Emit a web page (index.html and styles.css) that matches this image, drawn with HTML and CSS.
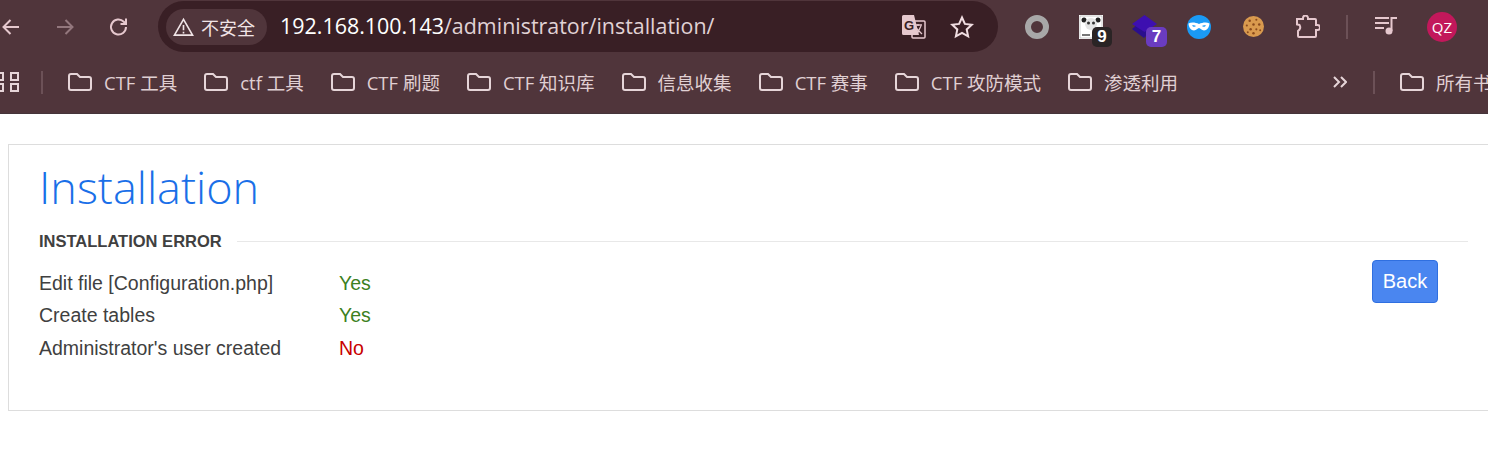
FILE: index.html
```html
<!DOCTYPE html>
<html>
<head>
    <title>Installation</title>
    <link rel="stylesheet" href="styles.css">
</head>
<body>
    <svg class="defs" width="0" height="0">
        <symbol id="folder" viewBox="0 0 24 18">
            <path d="M3 1h6l3 3h9a2 2 0 0 1 2 2v9a2 2 0 0 1-2 2H3a2 2 0 0 1-2-2V3a2 2 0 0 1 2-2z"/>
        </symbol>
    </svg>
    <header class="browser">
        <div class="toolbar">
            <div class="slot first">
                <svg class="ico" viewBox="0 0 20 20"><path d="M18 10H2M9.500 3 2.500 10l7 7"/></svg>
            </div>
            <div class="slot dim">
                <svg class="ico" viewBox="0 0 20 20"><path d="M2 10h16M10.500 3l7 7-7 7"/></svg>
            </div>
            <div class="slot">
                <svg class="ico" viewBox="0 0 20 20"><path d="M17 10a7.500 7.500 0 1 1-2.200-5.300L17 7M17 1.500V7h-5.500"/></svg>
            </div>
            <div class="omnibox">
                <div class="chip">
                    <svg class="warn" viewBox="0 0 22 20"><path d="M11 2 1.500 18.500h19zM11 8v5.500M11 15v1.800"/></svg>
                    <span>不安全</span>
                </div>
                <div class="url">192.168.100.143<span class="path">/administrator/installation/</span></div>
                <div class="omni-end">
                    <svg class="translate" viewBox="0 0 24 24">
                        <rect class="page-back" x="10" y="6" width="13" height="17" rx="1"/>
                        <path class="page-front" d="M1.500 0H12l5 20H1.500A1.500 1.500 0 0 1 0 18.500v-17A1.500 1.500 0 0 1 1.500 0z"/>
                        <text x="2" y="15" class="g">G</text>
                        <path class="page-x" d="M13 10h7M16 9v2M19 11l-4 8M14 13l6 6"/>
                    </svg>
                    <svg class="star" viewBox="0 0 24 24"><path d="m12 2.500 2.900 6.400 6.900.8-5.100 4.700 1.400 6.900-6.100-3.500-6.100 3.500 1.400-6.900-5.100-4.700 6.900-.8z"/></svg>
                </div>
            </div>
            <div class="extensions">
                <div class="slot"><div class="ring"></div></div>
                <div class="slot">
                    <svg class="panda" viewBox="0 0 24 24">
                        <rect width="24" height="24" fill="#fff"/>
                        <rect x="1" y="1" width="22" height="22" fill="none" stroke="#999" stroke-width=".5"/>
                        <circle cx="5" cy="5" r="2.500" fill="#222"/>
                        <circle cx="19" cy="5" r="2.500" fill="#222"/>
                        <circle cx="12" cy="9" r="6" fill="#e4e4e4"/>
                        <circle cx="9.500" cy="8" r="1.500" fill="#333"/>
                        <circle cx="14.500" cy="8" r="1.500" fill="#333"/>
                        <rect x="3" y="19" width="8" height="2" fill="#777"/>
                    </svg>
                    <span class="badge dark">9</span>
                </div>
                <div class="slot">
                    <svg class="stack" viewBox="0 0 25 24">
                        <path fill="#2a0f8e" d="M0 14 6 9l13 7-7 7z"/>
                        <path fill="#3d0fb0" d="M12.500 0 25 9l-12.500 8L0 9z"/>
                    </svg>
                    <span class="badge violet">7</span>
                </div>
                <div class="slot">
                    <svg class="mask" viewBox="0 0 24 24">
                        <circle cx="12" cy="12" r="12" fill="#1a9af5"/>
                        <path fill="#fff" d="M1.500 8.500c3-1.500 7-1 10.500.5 3.500-1.500 7.500-2 10.500-.5-.3 4-2.500 7-5.500 7-2.500 0-3.500-2.500-5-2.500s-2.500 2.500-5 2.500c-3 0-5.200-3-5.500-7z"/>
                        <path fill="#1a9af5" d="M5 10.500c1.500-.6 3-.4 4 .6-1 1-3 1-4-.6zM19 10.500c-1.500-.6-3-.4-4 .6 1 1 3 1 4-.6z"/>
                    </svg>
                </div>
                <div class="slot">
                    <svg class="cookie" viewBox="0 0 22 22">
                        <circle cx="11" cy="11" r="11" fill="#d99a4e"/>
                        <g fill="#8a4a1c">
                            <circle cx="7" cy="5" r="1.300"/><circle cx="14" cy="4" r="1.100"/>
                            <circle cx="11" cy="9" r="1.300"/><circle cx="4" cy="10" r="1.100"/>
                            <circle cx="17" cy="9" r="1.300"/><circle cx="8" cy="14" r="1.300"/>
                            <circle cx="14" cy="14" r="1.100"/><circle cx="11" cy="18" r="1.300"/>
                            <circle cx="18" cy="15" r="1"/><circle cx="5" cy="17" r="1"/>
                        </g>
                    </svg>
                </div>
                <div class="slot">
                    <svg class="puzzle" viewBox="0 0 25 24"><path d="M2 4h6V3a2.500 2.500 0 0 1 5 0v1h7a1 1 0 0 1 1 1v5h1.500a2.500 2.500 0 0 1 0 5H21v6a1 1 0 0 1-1 1H4a1 1 0 0 1-1-1v-5l1.500-1.500c1-1.500 1-3 0-4.500L2 9.500z"/></svg>
                </div>
                <div class="tool-sep"></div>
                <div class="slot">
                    <svg class="music" viewBox="0 0 24 20">
                        <path class="lines" d="M1 2h14M1 7h14M1 12h9"/>
                        <circle cx="15" cy="15" r="3.500" fill="#e6c8ce"/>
                        <path class="lines" d="M17.500 15V2H23"/>
                    </svg>
                </div>
                <div class="slot"><div class="avatar">QZ</div></div>
            </div>
        </div>
        <nav class="bookmarks">
            <svg class="apps" viewBox="0 0 19 20">
                <path d="M-4 1h7v7h-7zM11 1h7v7h-7zM-4 12h7v7h-7zM11 12h7v7h-7z"/>
            </svg>
            <div class="bm-sep"></div>
            <a class="bm"><svg class="folder"><use href="#folder"/></svg>CTF 工具</a>
            <a class="bm"><svg class="folder"><use href="#folder"/></svg>ctf 工具</a>
            <a class="bm"><svg class="folder"><use href="#folder"/></svg>CTF 刷题</a>
            <a class="bm"><svg class="folder"><use href="#folder"/></svg>CTF 知识库</a>
            <a class="bm"><svg class="folder"><use href="#folder"/></svg>信息收集</a>
            <a class="bm"><svg class="folder"><use href="#folder"/></svg>CTF 赛事</a>
            <a class="bm"><svg class="folder"><use href="#folder"/></svg>CTF 攻防模式</a>
            <a class="bm"><svg class="folder"><use href="#folder"/></svg>渗透利用</a>
            <svg class="more" viewBox="0 0 14 12"><path d="M1 1l5 5-5 5M8 1l5 5-5 5"/></svg>
            <div class="bm-sep end"></div>
            <a class="bm"><svg class="folder"><use href="#folder"/></svg>所有书签</a>
        </nav>
    </header>

    <main class="card">
        <h1>Installation</h1>
        <div class="section-title">
            <span>INSTALLATION ERROR</span>
            <div class="rule"></div>
        </div>
        <div class="content">
            <div class="checks">
                <div class="label">Edit file [Configuration.php]</div>
                <div class="yes">Yes</div>
                <div class="label">Create tables</div>
                <div class="yes">Yes</div>
                <div class="label">Administrator's user created</div>
                <div class="no">No</div>
            </div>
            <button class="back">Back</button>
        </div>
    </main>
</body>
</html>
```

FILE: styles.css
```css
* {
    box-sizing: border-box;
}
html, body {
    overflow: hidden;
}
body {
    margin: 0;
    height: 468px;
    background: #fff;
    font-family: "Liberation Sans", Arial, sans-serif;
    color: #404040;
}
.defs {
    position: absolute;
}

/* browser chrome */
.browser {
    background: #50353b;
    height: 114px;
    border-bottom: 1px solid #45343a;
}
.toolbar {
    display: flex;
    align-items: flex-start;
    height: 56px;
    padding-top: 1px;
}
.slot {
    position: relative;
    width: 54px;
    height: 51px;
    flex: none;
    display: flex;
    align-items: center;
    justify-content: center;
}
.slot.first {
    margin-left: -16px;
}
.slot.dim {
    opacity: 0.45;
}
.ico {
    width: 20px;
    height: 20px;
    fill: none;
    stroke: #e6c8ce;
    stroke-width: 2;
}
.omnibox {
    display: flex;
    align-items: center;
    width: 840px;
    height: 51px;
    margin-left: 12px;
    padding-left: 8px;
    background: #391f25;
    border-radius: 26px;
    flex: none;
}
.chip {
    display: flex;
    align-items: center;
    gap: 7px;
    width: 101px;
    height: 36px;
    padding-left: 7px;
    background: #50353b;
    border-radius: 18px;
    color: #f0e4e6;
    font-family: "Noto Sans CJK SC", sans-serif;
    font-size: 18px;
}
.warn {
    width: 21px;
    height: 20px;
    fill: none;
    stroke: #f0e4e6;
    stroke-width: 1.700;
}
.url {
    margin-top: -2px;
    margin-left: 13px;
    color: #fff;
    font-family: "Open Sans", sans-serif;
    font-size: 21.450px;
}
.path {
    color: #e0d2d5;
}
.omni-end {
    display: flex;
    align-items: center;
    gap: 24px;
    margin-left: auto;
    padding-right: 24px;
}
.translate {
    width: 24px;
    height: 24px;
}
.page-back {
    fill: #391f25;
    stroke: #e6c8ce;
    stroke-width: 1.500;
}
.page-front {
    fill: #e6c8ce;
}
.page-x {
    fill: none;
    stroke: #e6c8ce;
    stroke-width: 1.300;
}
.translate .g {
    fill: #391f25;
    font-size: 13px;
    font-weight: bold;
}
.star {
    width: 24px;
    height: 24px;
    fill: none;
    stroke: #f0dde1;
    stroke-width: 2;
}
.extensions {
    display: flex;
    align-items: center;
    margin-left: 12px;
}
.ring {
    width: 24px;
    height: 24px;
    border: 6px solid #a8a8a8;
    border-radius: 50%;
}
.panda {
    width: 24px;
    height: 24px;
}
.stack {
    width: 25px;
    height: 24px;
    margin-left: -2px;
}
.badge {
    position: absolute;
    left: 28px;
    top: 26px;
    width: 20px;
    height: 20px;
    border-radius: 5px;
    color: #fff;
    font-size: 17px;
    font-weight: bold;
    line-height: 20px;
    text-align: center;
}
.badge.dark {
    background: #2a2425;
}
.badge.violet {
    left: 28px;
    width: 21px;
    background: #6a3cc0;
}
.mask {
    width: 24px;
    height: 24px;
}
.cookie {
    width: 21px;
    height: 21px;
}
.puzzle {
    width: 25px;
    height: 24px;
    fill: none;
    stroke: #e6c8ce;
    stroke-width: 2;
}
.tool-sep {
    width: 2px;
    height: 24px;
    margin: 0 11px 0 12px;
    background: #6c5157;
    flex: none;
}
.music {
    width: 24px;
    height: 20px;
    margin-top: -1px;
}
.lines {
    fill: none;
    stroke: #e6c8ce;
    stroke-width: 2;
}
.avatar {
    width: 30px;
    height: 30px;
    margin-left: 4px;
    border-radius: 50%;
    background: #c2185b;
    color: #fff;
    font-family: "Open Sans", sans-serif;
    font-size: 15px;
    line-height: 30px;
    text-align: center;
}

/* bookmarks bar */
.bookmarks {
    display: flex;
    align-items: center;
    height: 52px;
    white-space: nowrap;
    overflow: hidden;
    font-family: "Open Sans", "Noto Sans CJK SC", sans-serif;
    font-size: 18.500px;
    color: #e0d0d3;
}
.apps {
    width: 19px;
    height: 20px;
    flex: none;
    fill: none;
    stroke: #e6d5d8;
    stroke-width: 2;
}
.bm-sep {
    width: 2px;
    height: 23px;
    margin: 0 25px 0 22px;
    background: #6c5157;
    flex: none;
}
.bm {
    display: flex;
    align-items: center;
    margin-right: 27px;
    flex: none;
}
.folder {
    width: 24px;
    height: 18px;
    margin-right: 12px;
    fill: none;
    stroke: #e6d5d8;
    stroke-width: 2;
}
.more {
    width: 14px;
    height: 12px;
    margin-left: 128px;
    flex: none;
    fill: none;
    stroke: #e6d5d8;
    stroke-width: 2;
}
.bm-sep.end {
    margin: 0 25px 0 26px;
}

/* page */
.card {
    width: 1500px;
    height: 267px;
    margin: 30px 0 0 8px;
    padding: 14px 30px 0;
    background: #fff;
    border: 1px solid #ddd;
}
h1 {
    margin: 0;
    color: #1a6fe8;
    font-family: "Open Sans", sans-serif;
    font-size: 45px;
    font-weight: 300;
    line-height: 56px;
}
.section-title {
    display: flex;
    align-items: center;
    gap: 15px;
    width: 1429px;
    margin-top: 16px;
    font-size: 16.500px;
    font-weight: bold;
    line-height: 20px;
}
.rule {
    flex: 1;
    height: 1px;
    background: #e8e8e8;
}
.content {
    display: flex;
    align-items: flex-start;
    justify-content: space-between;
    width: 1399px;
    margin-top: 9px;
}
.checks {
    display: grid;
    grid-template-columns: 300px auto;
    grid-auto-rows: 32.500px;
    align-items: center;
    margin-top: 7px;
    font-size: 19.500px;
}
.yes {
    color: #3c8022;
}
.no {
    color: #c80000;
}
.back {
    width: 66px;
    height: 43px;
    padding: 0;
    background: #4a86f0;
    border: 1px solid #2f6fe0;
    border-radius: 4px;
    color: #fff;
    font-family: "Liberation Sans", Arial, sans-serif;
    font-size: 20px;
}
```
